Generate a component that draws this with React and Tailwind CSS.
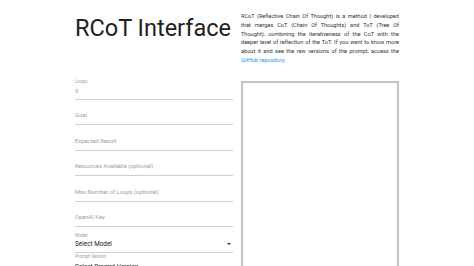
import React from 'react';

const fields = [
  { label: 'Goal' },
  { label: 'Expected Result' },
  { label: 'Resources Available (optional)' },
  { label: 'Max Number of Loops (optional)' },
  { label: 'OpenAI Key' },
];

function Field({ label }) {
  return (
    <div className="h-[25.5px] flex items-end">
      <div className="w-full border-b border-[#d0d0d0] pb-[5px] text-[5.8px] leading-[8px] text-[#9e9e9e]">
        {label}
      </div>
    </div>
  );
}

function SelectField({ label, value }) {
  return (
    <div className="h-[25.5px] shrink-0 flex flex-col justify-end">
      <div className="text-[4.5px] leading-[6px] text-[#a0a0a0]">{label}</div>
      <div className="w-full border-b border-[#d0d0d0] pt-[1px] pb-[3px] flex items-center justify-between">
        <span className="text-[6.4px] leading-[9px] text-[#222]">{value}</span>
        <svg width="6" height="4" viewBox="0 0 6 4" className="mr-[1px]">
          <path d="M1 1 L5 1 L3 3 Z" fill="#333" />
        </svg>
      </div>
    </div>
  );
}

export default function App() {
  return (
    <div className="w-[474px] h-[266px] overflow-hidden bg-white" style={{ fontFamily: 'Roboto, sans-serif' }}>
      <div className="w-[324px] mx-auto grid grid-cols-2 gap-x-[8px]">
        <div className="h-[74px] pt-[12px]">
          <h1 className="text-[23.5px] leading-[32px] text-[#212121] font-normal whitespace-nowrap">RCoT Interface</h1>
        </div>
        <div className="h-[74px] pt-[12px]">
          <p className="text-[5.6px] leading-[8.8px] text-[#333] text-justify">
            RCoT (Reflective Chain Of Thought) is a method I developed that merges CoT (Chain Of Thoughts) and ToT (Tree Of Thought), combining the iterativeness of the CoT with the deeper level of reflection of the ToT. If you want to know more about it and see the raw versions of the prompt, access the{' '}
            <a className="text-[#2196f3]">GitHub repository.</a>
          </p>
        </div>
        <div className="flex flex-col">
          <div className="h-[25.5px] shrink-0 flex flex-col justify-end">
            <div className="text-[4.5px] leading-[6px] text-[#a0a0a0]">Loops</div>
            <div className="w-full border-b border-[#d0d0d0] pt-[2px] pb-[4px] text-[5.8px] leading-[8px] text-[#9e9e9e]">0</div>
          </div>
          {fields.map((f) => (
            <Field key={f.label} label={f.label} />
          ))}
          <SelectField label="Model" value="Select Model" />
          <div className="shrink-0 flex flex-col pt-[1px]">
            <div className="text-[4.5px] leading-[6px] text-[#a0a0a0]">Prompt Version</div>
            <div className="pt-[3px] text-[6.4px] leading-[9px] text-[#222]">Select Prompt Version</div>
          </div>
        </div>
        <div className="pt-[7px]">
          <div className="h-[200px] border-2 border-[#c4c4c4]" />
        </div>
      </div>
    </div>
  );
}
